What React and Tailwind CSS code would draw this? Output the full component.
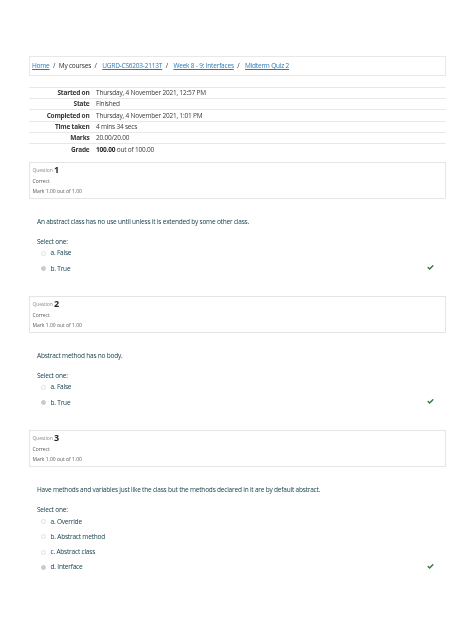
import { Check } from "lucide-react";

const summary = [
  ["Started on", "Thursday, 4 November 2021, 12:57 PM"],
  ["State", "Finished"],
  ["Completed on", "Thursday, 4 November 2021, 1:01 PM"],
  ["Time taken", "4 mins 34 secs"],
  ["Marks", "20.00/20.00"],
  ["Grade", <><b className="font-bold text-[#1d2125]">100.00</b> out of 100.00</>],
];

const questions = [
  {
    n: 1,
    text: "An abstract class has no use until unless it is extended by some other class.",
    options: ["a. False", "b. True"],
    picked: 1,
  },
  {
    n: 2,
    text: "Abstract method has no body.",
    options: ["a. False", "b. True"],
    picked: 1,
  },
  {
    n: 3,
    text: "Have methods and variables just like the class but the methods declared in it are by default abstract.",
    options: ["a. Override", "b. Abstract method", "c. Abstract class", "d. Interface"],
    picked: 3,
  },
];

export default function App() {
  return (
    <div className="min-h-[632px] bg-white pl-[29px] pr-[28px] pt-[56px] font-['Open_Sans',sans-serif] text-[6.5px] tracking-[-0.2px] text-[#373a3c] blur-[0.3px]">
      <nav className="flex h-[20px] items-center gap-[3.5px] border border-[#e6e8ea] pl-[2px] text-[6.5px]">
        <a className="text-[#2a7ab8] underline">Home</a>
        <span>/</span>
        <span className="text-[#2c2f33]">My courses</span>
        <span>/</span>
        <a className="ml-[2px] text-[#2a7ab8] underline">UGRD-CS6203-2113T</a>
        <span>/</span>
        <a className="ml-[2px] text-[#2a7ab8] underline">Week 8 - 9: Interfaces</a>
        <span>/</span>
        <a className="ml-[2px] text-[#2a7ab8] underline">Midterm Quiz 2</a>
      </nav>

      <div className="mt-[11px] border-t border-[#e6e8ea]">
        {summary.map(([label, value]) => (
          <div key={label} className="flex h-[11.2px] items-center border-b border-[#e6e8ea] last:border-b-0">
            <div className="w-[60.5px] text-right font-bold text-[#33363a]">{label}</div>
            <div className="ml-[6.5px]">{value}</div>
          </div>
        ))}
      </div>

      <div className="mt-[7px] flex flex-col gap-[22.5px]">
        {questions.map((q) => (
          <Question key={q.n} {...q} />
        ))}
      </div>
    </div>
  );
}

function Question({ n, text, options, picked }) {
  return (
    <section>
      <div className="flex h-[37px] flex-col justify-between border border-[#e3e5e7] px-[2.5px] pb-[3px] pt-[1px] text-[5px] tracking-normal text-[#555a5e]">
        <div className="flex items-center gap-[1.5px] leading-[12px]">
          <span className="tracking-[-0.15px] text-[#8a8f94]">Question</span>
          <span className="text-[9px] font-bold text-[#22262a]">{n}</span>
        </div>
        <div>Correct</div>
        <div>Mark 1.00 out of 1.00</div>
      </div>
      <div className="pl-[8px] pr-[12px] text-[6.5px] font-medium text-[#0f3b47]">
        <p className="mt-[18px] leading-[10px]">{text}</p>
        <p className="mt-[10px] leading-[10px]">Select one:</p>
        <ul className="mt-[1px] flex flex-col gap-[5px]">
          {options.map((opt, i) => (
            <li key={opt} className="flex h-[10.3px] items-center">
              <span
                className={
                  "ml-[4px] h-[5px] w-[5px] rounded-full border " +
                  (i === picked ? "border-[#c9cccf] bg-[#c9cccf]" : "border-[#dde0e2] bg-white")
                }
              />
              <span className="ml-[4.5px]">{opt}</span>
              {i === picked && <Check className="ml-auto h-[7px] w-[7px] -translate-y-[1px] text-[#2f7a42]" strokeWidth={5} />}
            </li>
          ))}
        </ul>
      </div>
    </section>
  );
}
